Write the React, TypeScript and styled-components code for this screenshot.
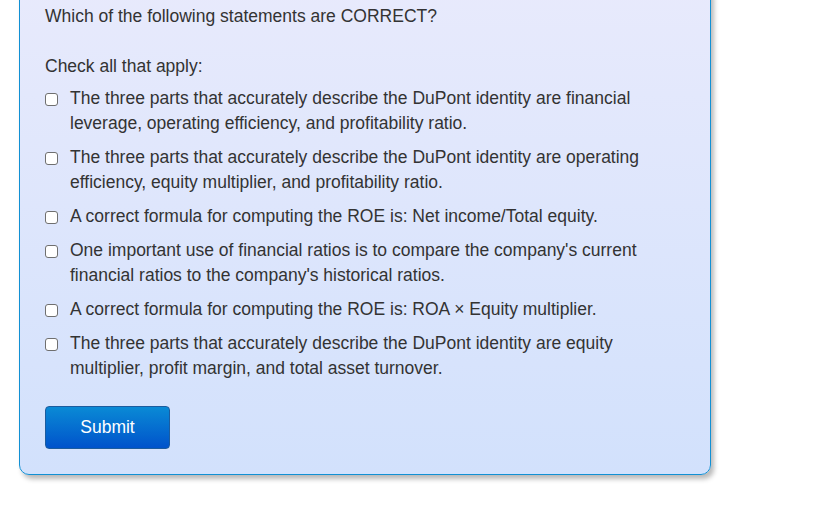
import styled, { createGlobalStyle } from "styled-components";

const GlobalStyle = createGlobalStyle`
  body {
    margin: 0;
    background: #ffffff;
    font-family: "Liberation Sans", Arial, sans-serif;
  }
`;

const Page = styled.div`
  padding: 0 0 40px 19px;
`;

const Card = styled.div`
  width: 692px;
  box-sizing: border-box;
  margin-top: -17px;
  padding: 20px 25px 25px;
  border: 1px solid #1190d4;
  border-radius: 10px;
  background: linear-gradient(to bottom, #e8eafc 0%, #d2e1fc 100%);
  box-shadow: 3px 4px 5px rgba(0, 0, 0, 0.28);
  color: #333333;
  font-size: 17.5px;
  line-height: 25.5px;
`;

const Question = styled.p`
  margin: 0 0 24.5px;
`;

const Hint = styled.p`
  margin: 0 0 6px;
`;

const Options = styled.ul`
  list-style: none;
  margin: 0;
  padding: 0;
  display: flex;
  flex-direction: column;
  gap: 8.3px;
`;

const Option = styled.li`
  display: flex;
  align-items: flex-start;
  gap: 12px;
`;

const Box = styled.span`
  flex: none;
  width: 11px;
  height: 11px;
  margin-top: 7px;
  border: 1px solid #6f6f6f;
  border-radius: 3px;
  background: #ffffff;
`;

const Submit = styled.button`
  margin-top: 24px;
  width: 125px;
  height: 43px;
  border: 1px solid #1c5c9e;
  border-radius: 4px;
  background: linear-gradient(to bottom, #0a8ad5 0%, #0053cb 100%);
  color: #ffffff;
  font-family: "Liberation Sans", Arial, sans-serif;
  font-size: 17.5px;
  cursor: pointer;
`;

const options = [
  "The three parts that accurately describe the DuPont identity are financial leverage, operating efficiency, and profitability ratio.",
  "The three parts that accurately describe the DuPont identity are operating efficiency, equity multiplier, and profitability ratio.",
  "A correct formula for computing the ROE is: Net income/Total equity.",
  "One important use of financial ratios is to compare the company's current financial ratios to the company's historical ratios.",
  "A correct formula for computing the ROE is: ROA × Equity multiplier.",
  "The three parts that accurately describe the DuPont identity are equity multiplier, profit margin, and total asset turnover.",
];

export default function App() {
  return (
    <Page>
      <GlobalStyle />
      <Card>
        <Question>Which of the following statements are CORRECT?</Question>
        <Hint>Check all that apply:</Hint>
        <Options>
          {options.map((text) => (
            <Option key={text}>
              <Box />
              <span>{text}</span>
            </Option>
          ))}
        </Options>
        <Submit>Submit</Submit>
      </Card>
    </Page>
  );
}
